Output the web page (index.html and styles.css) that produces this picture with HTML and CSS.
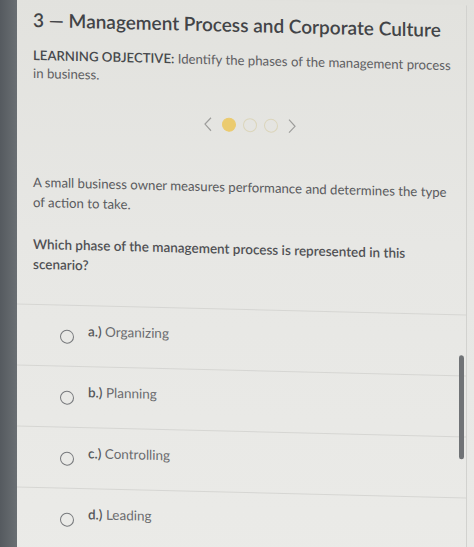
FILE: index.html
```html
<!DOCTYPE html>
<html>
<head>
<meta charset="utf-8">
<link rel="stylesheet" href="styles.css">
</head>
<body>
<div class="screen">
  <div class="edge"></div>
  <div class="panel">
    <div class="content">
      <header class="head">
        <h1 class="title">3 — Management Process and Corporate Culture</h1>
        <p class="objective"><b>LEARNING OBJECTIVE:</b> Identify the phases of the management process in business.</p>
      </header>
      <nav class="pager">
        <svg class="arrow" width="10" height="16" viewBox="0 0 10 16"><path d="M8 1.5 L2 8 L8 14.5" fill="none" stroke="#9d9d9b" stroke-width="1.2"/></svg>
        <span class="dot on"></span>
        <span class="dot"></span>
        <span class="dot"></span>
        <svg class="arrow" width="10" height="16" viewBox="0 0 10 16"><path d="M2 1.5 L8 8 L2 14.5" fill="none" stroke="#9d9d9b" stroke-width="1.2"/></svg>
      </nav>
      <section class="question">
        <p>A small business owner measures performance and determines the type of action to take.</p>
        <p>Which phase of the management process is represented in this scenario?</p>
      </section>
      <ul class="options">
        <li class="opt"><span class="radio"></span><span class="label"><b>a.)</b> Organizing</span></li>
        <li class="opt"><span class="radio"></span><span class="label"><b>b.)</b> Planning</span></li>
        <li class="opt"><span class="radio"></span><span class="label"><b>c.)</b> Controlling</span></li>
        <li class="opt"><span class="radio"></span><span class="label"><b>d.)</b> Leading</span></li>
      </ul>
      <div class="scrollbar"></div>
    </div>
  </div>
</div>
</body>
</html>
```
FILE: styles.css
```css
html, body {
  margin: 0;
  padding: 0;
  height: 100%;
  overflow: hidden;
}
body {
  background: #e3e3e0;
  font-family: Lato, "Liberation Sans", sans-serif;
  color: #58595b;
}
.screen {
  display: flex;
  height: 547px;
}
.edge {
  width: 17px;
  flex: none;
  background: linear-gradient(90deg, #555a5f, #6a6f73);
}
.panel {
  flex: 1;
  overflow: hidden;
  background: linear-gradient(180deg, #e1e1dd 0%, #e6e6e3 40%, #eaeae7 100%);
}
.content {
  position: relative;
  width: 449px;
  height: 600px;
  transform: skewY(1.4deg);
  transform-origin: 225px 273px;
  border-right: 1px solid #d2d2cf;
  background: linear-gradient(180deg, #e2e2de 0%, #e7e7e4 40%, #ebebe8 100%);
}
.head {
  padding: 11px 7px 0 16px;
}
.title {
  margin: 0;
  font-size: 19px;
  font-weight: 600;
  color: #424447;
  line-height: 28px;
  white-space: nowrap;
}
.objective {
  margin: 12px 0 0;
  font-size: 13.2px;
  line-height: 18px;
  color: #5f6063;
}
.objective b {
  font-weight: 600;
  color: #47494c;
}
.pager {
  display: flex;
  align-items: center;
  justify-content: center;
  gap: 7px;
  margin-top: 30px;
  padding-left: 16px;
}
.arrow {
  margin: 0 2px;
}
.dot {
  width: 14px;
  height: 14px;
  border-radius: 50%;
  border: 1.3px solid #dbd5bb;
  box-sizing: border-box;
}
.dot.on {
  background: #ebcb6f;
  border-color: #ebcb6f;
}
.question {
  padding: 44px 7px 0 16px;
  font-size: 13.2px;
  line-height: 20px;
  color: #5a5b5e;
}
.question p {
  margin: 0 0 22px;
}
.question p:last-child {
  margin-bottom: 0;
  font-size: 13.5px;
  font-weight: 600;
  color: #505154;
}
.options {
  list-style: none;
  margin: 30px 0 0;
  padding: 0;
  border-top: 1px solid #d6d6d3;
}
.opt {
  display: flex;
  align-items: flex-start;
  gap: 14px;
  height: 61px;
  box-sizing: border-box;
  padding: 15px 0 0 43px;
  border-bottom: 1px solid #d6d6d3;
  font-size: 13.5px;
  line-height: 20px;
  color: #6a6b6e;
}
.opt b {
  font-weight: 600;
  color: #55575a;
}
.radio {
  width: 14px;
  height: 14px;
  margin-top: 9px;
  border: 1.4px solid #77797c;
  border-radius: 50%;
  box-sizing: border-box;
  flex: none;
}
.scrollbar {
  position: absolute;
  right: 2px;
  top: 350px;
  width: 5px;
  height: 104px;
  border-radius: 3px;
  background: #707376;
}
```
